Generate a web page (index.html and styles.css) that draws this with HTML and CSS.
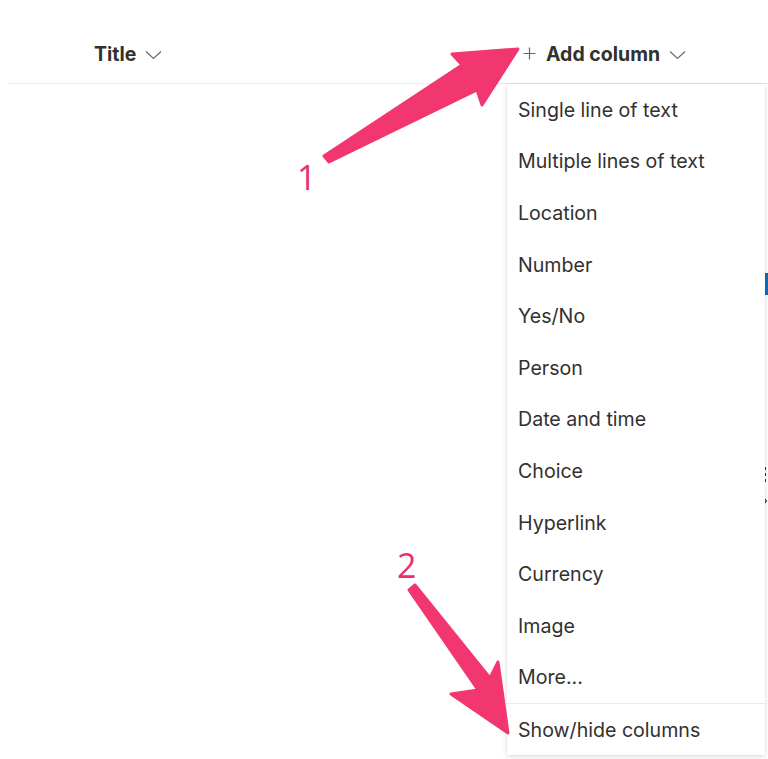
FILE: index.html
```html
<!DOCTYPE html>
<html>
<head>
<meta charset="utf-8">
<link rel="stylesheet" href="styles.css">
</head>
<body>
<div class="page">
  <div class="header">
    <div class="cell title-cell">
      <span class="col-name">Title</span>
      <svg class="chev" width="17" height="10" viewBox="0 0 17 10"><path d="M1 1.5 L8.5 8.5 L16 1.5" fill="none" stroke="#6b6966" stroke-width="1.2"/></svg>
    </div>
    <div class="cell add-cell">
      <svg class="plus" width="13" height="13" viewBox="0 0 13 13"><path d="M6.5 0.5 V12.5 M0.5 6.5 H12.5" fill="none" stroke="#6b6966" stroke-width="1.2"/></svg>
      <span class="col-name">Add column</span>
      <svg class="chev" width="17" height="10" viewBox="0 0 17 10"><path d="M1 1.5 L8.5 8.5 L16 1.5" fill="none" stroke="#6b6966" stroke-width="1.2"/></svg>
    </div>
  </div>

  <div class="behind">
    <div class="blue-bar"></div>
    <div class="marks">
      <span class="dot"></span>
      <span class="dot"></span>
      <span class="dot"></span>
      <svg class="mini-chev" width="4" height="8" viewBox="0 0 4 8"><path d="M0.5 0.5 L3.5 4 L0.5 7.5" fill="none" stroke="#323130" stroke-width="1.2"/></svg>
    </div>
  </div>

  <ul class="menu">
    <li>Single line of text</li>
    <li>Multiple lines of text</li>
    <li>Location</li>
    <li>Number</li>
    <li>Yes/No</li>
    <li>Person</li>
    <li>Date and time</li>
    <li>Choice</li>
    <li>Hyperlink</li>
    <li>Currency</li>
    <li>Image</li>
    <li>More...</li>
    <li class="sep">Show/hide columns</li>
  </ul>

  <svg class="arrows" width="768" height="759" viewBox="0 0 768 759">
    <polygon points="324,156 462,65 452,54 518,49 482,105 477,90 329,162" fill="#f2366f" stroke="#f2366f" stroke-width="3" stroke-linejoin="round"/>
    <polygon points="409,590 478,690 451,694 508,733 498,662 490,678 415,585" fill="#f2366f" stroke="#f2366f" stroke-width="3" stroke-linejoin="round"/>
  </svg>
  <span class="num num1">1</span>
  <span class="num num2">2</span>
</div>
</body>
</html>
```

FILE: styles.css
```css
* { box-sizing: border-box; }
html, body {
  margin: 0;
  padding: 0;
  background: #ffffff;
}
body {
  font-family: Inter, "Open Sans", "Liberation Sans", sans-serif;
  color: #323130;
}
.page {
  position: relative;
  width: 768px;
  height: 759px;
  overflow: hidden;
}
.header {
  display: flex;
  align-items: center;
  margin-left: 8px;
  height: 84px;
  padding-top: 24px;
  border-bottom: 1px solid #ebe9e8;
}
.cell {
  display: flex;
  align-items: center;
}
.title-cell {
  width: 515px;
  padding-left: 86px;
}
.col-name {
  font-size: 19.5px;
  font-weight: 700;
  color: #323130;
}
.chev { margin-left: 9px; margin-top: 2px; }
.plus { margin-right: 10px; }
.behind {
  position: absolute;
  right: 0;
  top: 84px;
  width: 6px;
  height: 600px;
}
.blue-bar {
  position: absolute;
  right: 0;
  top: 189px;
  width: 5px;
  height: 22px;
  background: #0f6cbd;
}
.marks {
  position: absolute;
  left: 1px;
  top: 383px;
  display: flex;
  flex-direction: column;
  gap: 3px;
}
.dot {
  display: block;
  width: 3px;
  height: 3px;
  background: #323130;
}
.mini-chev { margin-top: 12px; }
.menu {
  position: absolute;
  left: 507px;
  top: 84px;
  width: 258px;
  margin: 0;
  padding: 0;
  list-style: none;
  background: #ffffff;
  box-shadow: 0 2px 6px rgba(0, 0, 0, 0.12), 0 0 1px rgba(0, 0, 0, 0.15);
}
.menu li {
  height: 51.6px;
  display: flex;
  align-items: center;
  padding-left: 11px;
  font-size: 19.6px;
  color: #323130;
}
.menu li.sep {
  border-top: 1px solid #ebe9e8;
  height: 52px;
}
.arrows {
  position: absolute;
  left: 0;
  top: 0;
  pointer-events: none;
}
.num {
  position: absolute;
  font-family: "Open Sans", "Liberation Sans", sans-serif;
  font-size: 34px;
  line-height: 1;
  color: #e8306b;
}
.num1 { left: 297px; top: 160px; }
.num2 { left: 397px; top: 548px; }
```
